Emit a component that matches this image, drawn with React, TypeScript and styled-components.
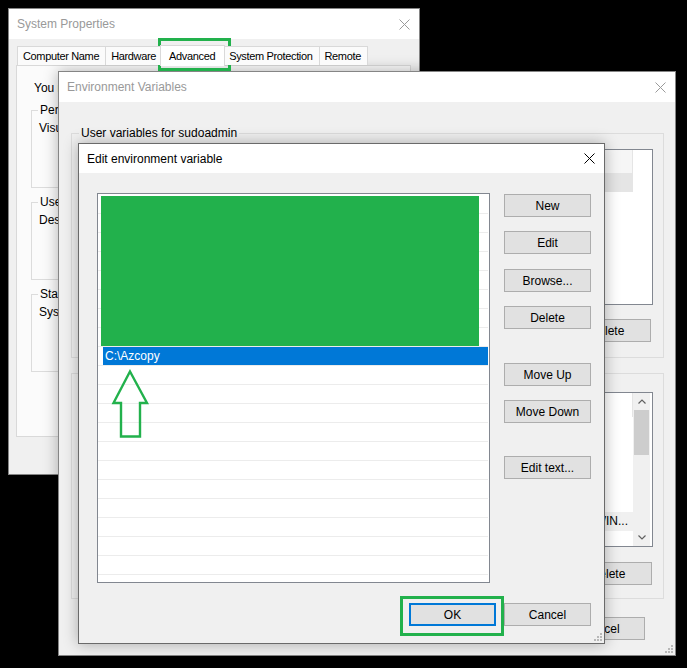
import styled, { createGlobalStyle } from "styled-components";

const GlobalStyle = createGlobalStyle`
  * { box-sizing: border-box; }
  html, body { margin: 0; padding: 0; background: #000; }
  body {
    font-family: "Liberation Sans", Arial, sans-serif;
    font-size: 12px;
    color: #000;
  }
`;

const GREEN = "#22b14c";

const Desktop = styled.div`
  position: relative;
  width: 687px;
  height: 668px;
  background: #000;
  overflow: hidden;
`;

type Box = { $x: number; $y: number; $w: number; $h: number };

const Window = styled.div<Box & { $active?: boolean }>`
  position: absolute;
  left: ${(p) => p.$x}px;
  top: ${(p) => p.$y}px;
  width: ${(p) => p.$w}px;
  height: ${(p) => p.$h}px;
  display: flex;
  flex-direction: column;
  background: #f0f0f0;
  border: 1px solid ${(p) => (p.$active ? "#6a6a6a" : "#858585")};
  box-shadow: 0 0 14px rgba(0, 0, 0, 0.3);
`;

const TitleBar = styled.div<{ $h: number; $active?: boolean }>`
  flex: none;
  height: ${(p) => p.$h}px;
  display: flex;
  align-items: center;
  justify-content: space-between;
  padding: 0 9px 0 8px;
  background: #fff;
  color: ${(p) => (p.$active ? "#000" : "#999")};
`;

const CloseGlyph = ({ color }: { color: string }) => (
  <svg width="11" height="11" viewBox="0 0 11 11">
    <path d="M0.5 0.5 L10.5 10.5 M10.5 0.5 L0.5 10.5" stroke={color} strokeWidth="1" />
  </svg>
);

const Button = styled.button<{ $w: number; $mt?: number; $default?: boolean }>`
  flex: none;
  width: ${(p) => p.$w}px;
  height: 23px;
  margin: ${(p) => p.$mt ?? 0}px 0 0;
  padding: 0;
  font: inherit;
  color: #000;
  background: #e1e1e1;
  border: ${(p) => (p.$default ? "2px solid #0078d7" : "1px solid #adadad")};
  border-radius: 0;
`;

const GripWrap = styled.div`
  position: absolute;
  right: 2px;
  bottom: 2px;
  width: 8px;
  height: 8px;
  display: flex;
`;

const Grip = () => (
  <GripWrap>
    <svg width="8" height="8" viewBox="0 0 8 8" fill="#b8b8b8">
      <rect x="6" y="0" width="2" height="2" />
      <rect x="3" y="3" width="2" height="2" />
      <rect x="6" y="3" width="2" height="2" />
      <rect x="0" y="6" width="2" height="2" />
      <rect x="3" y="6" width="2" height="2" />
      <rect x="6" y="6" width="2" height="2" />
    </svg>
  </GripWrap>
);

const Highlight = styled.div<Box>`
  position: absolute;
  left: ${(p) => p.$x}px;
  top: ${(p) => p.$y}px;
  width: ${(p) => p.$w}px;
  height: ${(p) => p.$h}px;
  border: 3px solid ${GREEN};
  pointer-events: none;
`;

/* ---------- System Properties ---------- */

const SysBody = styled.div`
  flex: 1;
  display: flex;
  flex-direction: column;
  padding: 7px 8px 0 7px;
`;

const TabStrip = styled.div`
  display: flex;
  align-items: flex-end;
  height: 19px;
  padding-left: 1px;
  position: relative;
  z-index: 1;
`;

const Tab = styled.div<{ $selected?: boolean }>`
  position: relative;
  z-index: ${(p) => (p.$selected ? 2 : 0)};
  height: ${(p) => (p.$selected ? 21 : 19)}px;
  margin: ${(p) => (p.$selected ? "0 -2px -1px" : "0")};
  padding: 0 ${(p) => (p.$selected ? 9 : 6)}px 0 ${(p) => (p.$selected ? 8 : 5)}px;
  display: flex;
  align-items: center;
  font-size: 11px;
  letter-spacing: -0.35px;
  white-space: nowrap;
  background: ${(p) => (p.$selected ? "#fff" : "#fbfbfb")};
  border: 1px solid #d9d9d9;
  border-bottom: none;
  border-right: ${(p) => (p.$selected ? "1px solid #d9d9d9" : "none")};
  &:last-child {
    border-right: 1px solid #d9d9d9;
  }
`;

const TabPanel = styled.div`
  height: 372px;
  display: flex;
  flex-direction: column;
  padding: 15px 14px 0;
  background: #fbfbfb;
  border: 1px solid #d9d9d9;
`;

const Note = styled.div`
  margin-left: 3px;
  line-height: 14px;
  white-space: nowrap;
`;

const SysGroup = styled.fieldset<{ $mt: number }>`
  margin: ${(p) => p.$mt}px 0 0;
  padding: 0 6px;
  height: 85px;
  min-width: 0;
  border: 1px solid #dcdcdc;
`;

const Legend = styled.legend<{ $shift?: number }>`
  padding: 0 2px;
  margin-left: ${(p) => p.$shift ?? 0}px;
  line-height: 14px;
  font-size: 12px;
`;

const GroupText = styled.div`
  margin-top: 4px;
  margin-left: 1px;
  line-height: 14px;
  white-space: nowrap;
`;

/* ---------- Environment Variables ---------- */

const EnvBody = styled.div`
  flex: 1;
  display: flex;
  flex-direction: column;
  padding: 0 11px 0 12px;
`;

const EnvGroup = styled.fieldset<{ $mt: number; $pb: number }>`
  margin: ${(p) => p.$mt}px 0 0;
  padding: 0 10px ${(p) => p.$pb}px;
  min-width: 0;
  border: 1px solid #dcdcdc;
`;

const ListView = styled.div<{ $h: number; $mt: number }>`
  margin-top: ${(p) => p.$mt}px;
  height: ${(p) => p.$h}px;
  display: flex;
  background: #fff;
  border: 1px solid #828790;
  overflow: hidden;
`;

const Columns = styled.div`
  width: 550px;
  flex: none;
  display: flex;
  flex-direction: column;
`;

const HeaderRow = styled.div<{ $h: number; $bg: string }>`
  display: flex;
  height: ${(p) => p.$h}px;
  flex: none;
  background: ${(p) => p.$bg};
`;

const HeaderCell = styled.div<{ $w: number }>`
  width: ${(p) => p.$w}px;
  border-right: 1px solid #e5e5e5;
`;

const ListRow = styled.div<{ $tone?: string }>`
  display: flex;
  height: 19px;
  flex: none;
  line-height: 19px;
  background: ${(p) => p.$tone ?? "transparent"};
`;

const Cell = styled.div<{ $w: number; $right?: boolean }>`
  width: ${(p) => p.$w}px;
  flex: none;
  padding: 0 5px;
  overflow: hidden;
  white-space: nowrap;
  text-align: ${(p) => (p.$right ? "right" : "left")};
`;

const ScrollBar = styled.div`
  width: 17px;
  flex: none;
  display: flex;
  flex-direction: column;
  background: #f0f0f0;
`;

const ScrollArrow = styled.div`
  height: 17px;
  flex: none;
  display: flex;
  align-items: center;
  justify-content: center;
`;

const ScrollThumb = styled.div`
  height: 45px;
  margin: 0 1px;
  background: #cdcdcd;
`;

const ScrollTrack = styled.div`
  flex: 1;
`;

const Chevron = ({ up }: { up?: boolean }) => (
  <svg width="8" height="5" viewBox="0 0 8 5">
    <path
      d={up ? "M0.5 4.5 L4 1 L7.5 4.5" : "M0.5 0.5 L4 4 L7.5 0.5"}
      stroke="#606060"
      strokeWidth="1.2"
      fill="none"
    />
  </svg>
);

const ButtonRow = styled.div<{ $mt: number; $pr: number }>`
  display: flex;
  justify-content: flex-end;
  gap: 8px;
  margin-top: ${(p) => p.$mt}px;
  padding-right: ${(p) => p.$pr}px;
`;

/* ---------- Edit environment variable ---------- */

const DialogBody = styled.div`
  flex: 1;
  display: flex;
  flex-direction: column;
  padding: 20px 13px 0 18px;
`;

const DialogMain = styled.div`
  display: flex;
  gap: 14px;
`;

const PathList = styled.div`
  position: relative;
  width: 393px;
  height: 390px;
  padding: 1px 1px 0 0;
  display: flex;
  flex-direction: column;
  background: #fff;
  border: 1px solid #828790;
  overflow: hidden;
`;

const PathRow = styled.div`
  flex: none;
  height: 19px;
  border-bottom: 1px solid #ececec;
`;

const SelectedEntry = styled.div`
  height: 18px;
  margin-left: 5px;
  padding-left: 2px;
  line-height: 18px;
  color: #fff;
  background: #0078d7;
`;

const Redaction = styled.div`
  position: absolute;
  left: 3px;
  top: 2px;
  width: 378px;
  height: 150px;
  background: ${GREEN};
`;

const ArrowMark = styled.svg`
  position: absolute;
  left: 13px;
  top: 175px;
`;

const ButtonColumn = styled.div`
  display: flex;
  flex-direction: column;
`;

const DialogFooter = styled.div`
  display: flex;
  justify-content: flex-end;
  gap: 8px;
  margin-top: 20px;
`;

const pathRows = Array.from({ length: 21 }, (_, i) => i);
const userRows = [0, 1, 2, 3];
const systemRows = [0, 1, 2, 3, 4];

export default function App() {
  return (
    <Desktop>
      <GlobalStyle />

      <Window $x={8} $y={8} $w={412} $h={467}>
        <TitleBar $h={30}>
          System Properties
          <CloseGlyph color="#9a9a9a" />
        </TitleBar>
        <SysBody>
          <TabStrip>
            <Tab>Computer Name</Tab>
            <Tab>Hardware</Tab>
            <Tab $selected>Advanced</Tab>
            <Tab>System Protection</Tab>
            <Tab>Remote</Tab>
          </TabStrip>
          <TabPanel>
            <Note>You must be logged on as an Administrator</Note>
            <SysGroup $mt={8}>
              <Legend>Performance</Legend>
              <GroupText>Visual effects, processor scheduling</GroupText>
            </SysGroup>
            <SysGroup $mt={7}>
              <Legend>User Profiles</Legend>
              <GroupText>Desktop settings</GroupText>
            </SysGroup>
            <SysGroup $mt={7}>
              <Legend>Startup and Recovery</Legend>
              <GroupText>System startup</GroupText>
            </SysGroup>
          </TabPanel>
        </SysBody>
      </Window>

      <Window $x={58} $y={71} $w={618} $h={585}>
        <TitleBar $h={30}>
          Environment Variables
          <CloseGlyph color="#9a9a9a" />
        </TitleBar>
        <EnvBody>
          <EnvGroup $mt={24} $pb={15}>
            <Legend $shift={-3}>User variables for sudoadmin</Legend>
            <ListView $h={156} $mt={9}>
              <Columns>
                <HeaderRow $h={23} $bg="#f6f6f6">
                  <HeaderCell $w={140} />
                  <HeaderCell $w={410} />
                </HeaderRow>
                {userRows.map((i) => (
                  <ListRow key={i} $tone={i === 0 ? "#e5e5e5" : undefined} />
                ))}
              </Columns>
            </ListView>
            <ButtonRow $mt={14} $pr={2}>
              <Button $w={88}>Delete</Button>
            </ButtonRow>
          </EnvGroup>

          <EnvGroup $mt={8} $pb={13}>
            <Legend $shift={-3}>System variables</Legend>
            <ListView $h={155} $mt={12}>
              <Columns>
                <HeaderRow $h={24} $bg="#fff">
                  <HeaderCell $w={140} />
                  <HeaderCell $w={410} />
                </HeaderRow>
                {systemRows.map((i) => (
                  <ListRow key={i} />
                ))}
                <ListRow $tone="#f0f0f0">
                  <Cell $w={140}>Path</Cell>
                  <Cell $w={410} $right>
                    C:\WINDOWS\system32;C:\WINDOWS;C:\WIN...
                  </Cell>
                </ListRow>
              </Columns>
              <ScrollBar>
                <ScrollArrow>
                  <Chevron up />
                </ScrollArrow>
                <ScrollThumb />
                <ScrollTrack />
                <ScrollArrow>
                  <Chevron />
                </ScrollArrow>
              </ScrollBar>
            </ListView>
            <ButtonRow $mt={15} $pr={1}>
              <Button $w={88}>Delete</Button>
            </ButtonRow>
          </EnvGroup>

          <ButtonRow $mt={18} $pr={19}>
            <Button $w={88}>Cancel</Button>
          </ButtonRow>
        </EnvBody>
        <Grip />
      </Window>

      <Window $x={78} $y={143} $w={527} $h={501} $active>
        <TitleBar $h={29} $active>
          Edit environment variable
          <CloseGlyph color="#000" />
        </TitleBar>
        <DialogBody>
          <DialogMain>
            <PathList>
              {pathRows.map((i) => (
                <PathRow key={i}>
                  {i === 8 && <SelectedEntry>C:\Azcopy</SelectedEntry>}
                </PathRow>
              ))}
              <Redaction />
              <ArrowMark width="40" height="70" viewBox="0 0 40 70">
                <path
                  d="M19 2.5 L36 34 L29 34 L29 67.5 L10 67.5 L10 34 L2.5 34 Z"
                  fill="none"
                  stroke={GREEN}
                  strokeWidth="2.4"
                />
              </ArrowMark>
            </PathList>
            <ButtonColumn>
              <Button $w={87} $mt={1}>New</Button>
              <Button $w={87} $mt={14}>Edit</Button>
              <Button $w={87} $mt={15}>Browse...</Button>
              <Button $w={87} $mt={14}>Delete</Button>
              <Button $w={87} $mt={34}>Move Up</Button>
              <Button $w={87} $mt={14}>Move Down</Button>
              <Button $w={87} $mt={33}>Edit text...</Button>
            </ButtonColumn>
          </DialogMain>
          <DialogFooter>
            <Button $w={87} $default>
              OK
            </Button>
            <Button $w={87}>Cancel</Button>
          </DialogFooter>
        </DialogBody>
        <Grip />
      </Window>

      <Highlight $x={158} $y={38} $w={73} $h={33} />
      <Highlight $x={400} $y={596} $w={104} $h={40} />
    </Desktop>
  );
}
